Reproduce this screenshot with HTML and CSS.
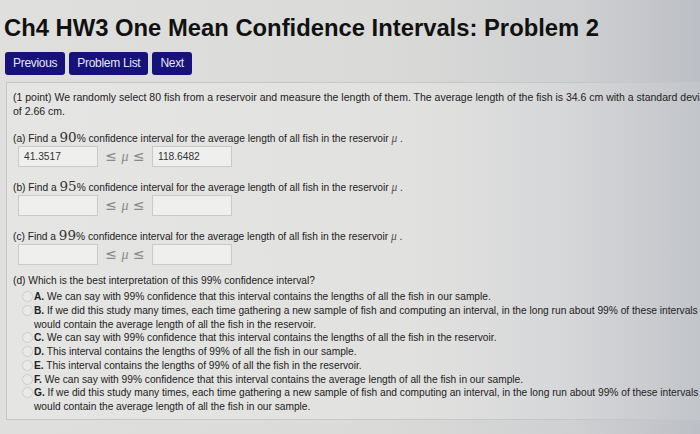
FILE: index.html
```html
<!DOCTYPE html>
<html>
<head>
<meta charset="utf-8">
<link rel="stylesheet" href="styles.css">
</head>
<body>
<div class="page">
  <h1 class="title">Ch4 HW3 One Mean Confidence Intervals: Problem 2</h1>
  <div class="nav">
    <span class="btn">Previous</span>
    <span class="btn">Problem List</span>
    <span class="btn">Next</span>
  </div>
  <div class="problem">
    <p class="intro">(1 point) We randomly select 80 fish from a reservoir and measure the length of them. The average length of the fish is 34.6 cm with a standard deviation<br>of 2.66 cm.</p>

    <p class="q qa">(a) Find a <span class="m">90</span>% confidence interval for the average length of all fish in the reservoir <i class="mu">μ</i> .</p>
    <div class="row">
      <span class="inp">41.3517</span>
      <span class="rel">≤ <i>μ</i> ≤</span>
      <span class="inp">118.6482</span>
    </div>

    <p class="q">(b) Find a <span class="m">95</span>% confidence interval for the average length of all fish in the reservoir <i class="mu">μ</i> .</p>
    <div class="row">
      <span class="inp"></span>
      <span class="rel">≤ <i>μ</i> ≤</span>
      <span class="inp"></span>
    </div>

    <p class="q">(c) Find a <span class="m">99</span>% confidence interval for the average length of all fish in the reservoir <i class="mu">μ</i> .</p>
    <div class="row">
      <span class="inp"></span>
      <span class="rel">≤ <i>μ</i> ≤</span>
      <span class="inp"></span>
    </div>

    <p class="qd">(d) Which is the best interpretation of this 99% confidence interval?</p>
    <ul class="opts">
      <li><span class="radio"></span><span class="txt"><b>A.</b> We can say with 99% confidence that this interval contains the lengths of all the fish in our sample.</span></li>
      <li><span class="radio"></span><span class="txt"><b>B.</b> If we did this study many times, each time gathering a new sample of fish and computing an interval, in the long run about 99% of these intervals would contain the average length of all the fish in the reservoir.</span></li>
      <li><span class="radio"></span><span class="txt"><b>C.</b> We can say with 99% confidence that this interval contains the lengths of all the fish in the reservoir.</span></li>
      <li><span class="radio"></span><span class="txt"><b>D.</b> This interval contains the lengths of 99% of all the fish in our sample.</span></li>
      <li><span class="radio"></span><span class="txt"><b>E.</b> This interval contains the lengths of 99% of all the fish in the reservoir.</span></li>
      <li><span class="radio"></span><span class="txt"><b>F.</b> We can say with 99% confidence that this interval contains the average length of all the fish in our sample.</span></li>
      <li><span class="radio"></span><span class="txt"><b>G.</b> If we did this study many times, each time gathering a new sample of fish and computing an interval, in the long run about 99% of these intervals would contain the average length of all the fish in our sample.</span></li>
    </ul>
  </div>
</div>
</body>
</html>
```

FILE: styles.css
```css
html, body {
  margin: 0;
  padding: 0;
  width: 700px;
  height: 434px;
  overflow: hidden;
}
body {
  background: linear-gradient(90deg, #dfdfdd 0%, #dadad8 55%, #cfd0d2 82%, #bcbfc5 100%);
  font-family: "Liberation Sans", Arial, sans-serif;
  color: #1c1c1c;
}
.page {
  padding: 13px 0 0 4px;
  width: 696px;
  overflow: hidden;
}
.title {
  margin: 0;
  font-size: 23.8px;
  font-weight: bold;
  line-height: 30px;
  color: #111;
  white-space: nowrap;
}
.nav {
  display: flex;
  gap: 4px;
  margin: 9px 0 0 1px;
}
.btn {
  background: #16127a;
  color: #e6e6ef;
  font-size: 12px;
  line-height: 23px;
  height: 23px;
  padding: 0 8px;
  border-radius: 3px;
  letter-spacing: -0.3px;
}
.problem {
  margin: 7px 0 0 2px;
  width: 744px;
  height: 338px;
  border: 1px solid #c6c6c4;
  background: linear-gradient(90deg, #e5e5e3 0%, #e1e1df 55%, #d6d7d9 75%, #c2c5ca 93%);
  padding: 7px 0 0 6px;
  box-sizing: border-box;
  font-size: 10.2px;
  color: #222;
}
.problem p {
  margin: 0;
}
.intro {
  white-space: nowrap;
  font-size: 10.5px;
  line-height: 14px;
}
.q {
  margin-top: 13px !important;
  line-height: 14px;
}
.qa {
  margin-top: 13px !important;
}
.q + .row {
  margin-top: 0;
}
.m {
  font-family: "DejaVu Serif", "Liberation Serif", serif;
  font-size: 13.5px;
  color: #333;
  line-height: 10px;
}
.mu {
  font-family: "Liberation Serif", serif;
  font-size: 11.5px;
  color: #555;
}
.row {
  display: flex;
  align-items: center;
  padding-left: 5px;
}
.inp {
  width: 80px;
  height: 21px;
  box-sizing: border-box;
  border: 1px solid #c9c9c7;
  background: #efefed;
  line-height: 19px;
  padding-left: 5px;
  font-size: 10.2px;
  color: #333;
}
.rel {
  width: 54px;
  text-align: center;
  font-family: "DejaVu Sans", sans-serif;
  font-size: 14px;
  line-height: 16px;
  color: #8a8a8a;
}
.rel i {
  font-family: "Liberation Serif", serif;
  font-size: 14px;
}
.qd {
  margin-top: 9px !important;
  line-height: 14px;
}
.opts {
  list-style: none;
  margin: 2px 0 0 0;
  padding: 0 0 0 9px;
  width: 690px;
}
.opts li {
  display: flex;
  align-items: flex-start;
  line-height: 13.75px;
}
.radio {
  flex: none;
  width: 11px;
  height: 11px;
  box-sizing: border-box;
  border-radius: 50%;
  border: 1px solid #cdcdcd;
  background: #e9e9e9;
  margin: 1px 1px 0 0;
}
.txt {
  width: 668px;
}
.txt b {
  font-weight: bold;
}
```
